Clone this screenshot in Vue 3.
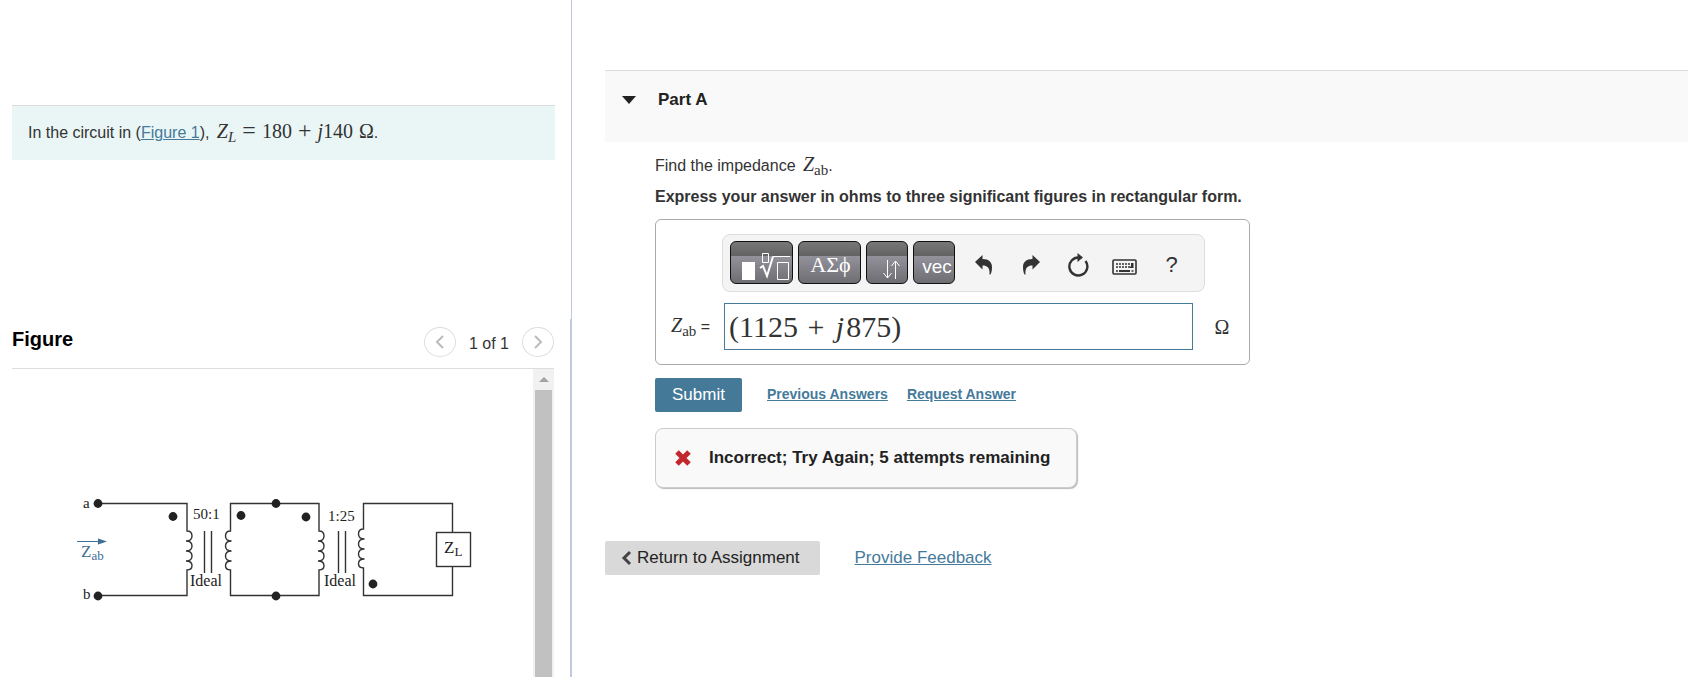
<template>
  <div class="page">
    <aside class="side">
      <section class="intro-area">
        <p class="intro">
          In the circuit in (<a href="#figure">Figure 1</a>),
          <span class="math equation"><i>Z</i><sub><i>L</i></sub><span class="op">=</span>180<span class="op">+</span><i>j</i>140<span class="unit">Ω</span></span>.
        </p>
      </section>

      <section id="figure" class="figure-area">
        <header class="figure-header">
          <h2>Figure</h2>
          <nav class="pager">
            <button type="button" aria-label="Previous figure">
              <svg width="10" height="16" viewBox="0 0 10 16"><path d="M8 2L2 8l6 6" /></svg>
            </button>
            <span>{{ figureIndex }} of {{ figureCount }}</span>
            <button type="button" aria-label="Next figure">
              <svg width="10" height="16" viewBox="0 0 10 16"><path d="M2 2l6 6-6 6" /></svg>
            </button>
          </nav>
        </header>

        <div class="figure-body">
          <svg class="circuit" width="410" height="120" viewBox="70 490 410 120">
            <!-- wires and windings -->
            <g class="wire">
              <path d="M98 503.500H187V531q5 0 5 5t-6 5q6 0 6 5t-6 5q6 0 6 5t-6 5q6 0 6 4.500t-5 4.500V595.500H98" />
              <path d="M319 503.500H230.500V531q-5 0-5 5t6 5q-6 0-6 5t6 5q-6 0-6 5t6 5q-6 0-6 4.500t5 4.500V595.500H319V570q5 0 5-4.500t-6-4.500q6 0 6-5t-6-5q6 0 6-5t-6-5q6 0 6-5t-5-5Z" />
              <path d="M452.500 532V503.500H363.500V529q-5 0-5 5t6 5q-6 0-6 5t6 5q-6 0-6 5t6 5q-6 0-6 4.500t5 4.500V595.500H452.500V567" />
              <path d="M204.500 531v42M211.500 531v42M338.500 531v42M345.500 531v42" />
              <rect x="436.500" y="532.500" width="34" height="34" />
            </g>
            <circle v-for="(dot, i) in dots" :key="i" :cx="dot[0]" :cy="dot[1]" r="4.400" />
            <g class="arrow">
              <path d="M77 541.500h24" />
              <path class="head" d="M98 538.500l9 3-9 3z" />
            </g>
            <text x="83" y="508">a</text>
            <text x="83" y="599">b</text>
            <text x="193" y="519">50:1</text>
            <text x="328" y="521">1:25</text>
            <text x="190" y="586" class="medium">Ideal</text>
            <text x="324" y="586" class="medium">Ideal</text>
            <text x="444" y="553" class="large">Z<tspan class="small" dy="3">L</tspan></text>
            <text x="81" y="557" class="large blue">Z<tspan class="small" dy="3">ab</tspan></text>
          </svg>
          <div class="scrollbar">
            <button type="button" class="scroll-up" aria-label="Scroll up"></button>
            <div class="thumb"></div>
          </div>
        </div>
      </section>
    </aside>

    <main class="main">
      <header class="part-header">
        <button type="button" class="part-toggle" @click="isOpen = !isOpen">
          <span class="caret"></span>
          Part A
        </button>
      </header>

      <section v-if="isOpen" class="part-body">
        <p class="question">
          Find the impedance <span class="math equation"><i>Z</i><sub>ab</sub></span>.
        </p>
        <p class="instructions">Express your answer in ohms to three significant figures in rectangular form.</p>

        <div class="answer-box">
          <div class="toolbar">
            <button type="button" class="key key-wide" aria-label="Templates">
              <svg width="61" height="41" viewBox="1 1 61 41">
                <rect x="12" y="21" width="13" height="18" fill="#fff" />
                <path d="M32.500 12.500h6v9h-6zM47.500 21.500h11v17h-11zM43 15.500h17" />
                <path class="thick" d="M30 27l3-2 4 10 6-19.500" />
              </svg>
            </button>
            <button type="button" class="key key-wide greek">ΑΣϕ</button>
            <button type="button" class="key key-small" aria-label="Subscript and superscript">
              <svg width="40" height="41" viewBox="1 1 40 41">
                <path d="M21.500 19v18M17.500 32l4 5 4-5M29.500 38V20M25.500 25l4-5 4 5" />
              </svg>
            </button>
            <button type="button" class="key key-small vec">vec</button>
            <button type="button" class="tool" aria-label="Undo">
              <svg width="18" height="20" viewBox="0 0 18 20">
                <path d="M0 7L7.500 0v4C14 4 17 7.500 17 12c0 3-.5 5.500-1.500 7.500h-1C15 13 12.500 10.500 7.500 10.500v4z" />
              </svg>
            </button>
            <button type="button" class="tool" aria-label="Redo">
              <svg width="18" height="20" viewBox="0 0 18 20">
                <path d="M18 7L10.500 0v4C4 4 1 7.500 1 12c0 3 .5 5.500 1.500 7.500h1C3 13 5.500 10.500 10.500 10.500v4z" />
              </svg>
            </button>
            <button type="button" class="tool" aria-label="Reset">
              <svg width="22" height="24" viewBox="0 0 22 24">
                <path class="ring" d="M12 4.500a9 9 0 1 0 6.500 3.500" />
                <path d="M10.500 0l5.500 4.500-5.500 4.500z" />
              </svg>
            </button>
            <button type="button" class="tool" aria-label="Keyboard shortcuts">
              <svg class="keyboard" width="26" height="16" viewBox="0 0 26 16">
                <rect class="frame" x="1" y="1" width="23" height="14" rx="1" />
                <path class="dots" d="M4 5h15M4 8h14M4 12h2M19.500 12h2" />
                <path d="M7 11h11v2H7zM19 4h2.500v5H18V7.500h1z" />
              </svg>
            </button>
            <button type="button" class="tool help" aria-label="Help">?</button>
          </div>

          <div class="answer-row">
            <label for="answer"><span class="math"><i>Z</i><sub>ab</sub></span> =</label>
            <div class="field">
              <div class="formula" aria-hidden="true">
                <template v-for="(part, i) in formulaParts" :key="i"><i v-if="isVariable(part)">{{ part }}</i><span v-else-if="part === '+'" class="plus">{{ part }}</span><template v-else>{{ part }}</template></template>
              </div>
              <input id="answer" v-model="answer" type="text" autocomplete="off" spellcheck="false" />
            </div>
            <span class="math answer-unit">Ω</span>
          </div>
        </div>

        <div class="actions">
          <button type="button" class="submit">Submit</button>
          <a href="#previous">Previous Answers</a>
          <a href="#request">Request Answer</a>
        </div>

        <div class="feedback" role="status">
          <svg width="18" height="18" viewBox="0 0 18 18"><path d="M3 3l12 12M15 3L3 15" /></svg>
          Incorrect; Try Again; 5 attempts remaining
        </div>
      </section>

      <footer class="footer">
        <button type="button" class="return">
          <svg width="11" height="16" viewBox="0 0 11 16"><path d="M9 2L3 8l6 6" /></svg>
          Return to Assignment
        </button>
        <a href="#feedback">Provide Feedback</a>
      </footer>
    </main>
  </div>
</template>

<script setup>
import { ref, computed } from 'vue'

const isOpen = ref(true)
const figureIndex = ref(1)
const figureCount = ref(1)
const answer = ref('(1125 + j875)')

// letters are variables and are set in italics
const formulaParts = computed(() => answer.value.split(/([a-z]+|\+)/i).filter(Boolean))
const isVariable = (part) => /^[a-z]+$/i.test(part)

const dots = [
  [98, 503.5],
  [98, 596],
  [173, 516.5],
  [241, 515.5],
  [276, 503.5],
  [276, 596],
  [306, 517],
  [373, 584]
]
</script>

<style>
body {
  margin: 0;
  background: #fff;
}
</style>

<style scoped>
.page {
  display: grid;
  grid-template-columns: minmax(0, 572fr) minmax(0, 1116fr);
  min-height: 100vh;
  font-family: "Liberation Sans", Arial, sans-serif;
  font-size: 16px;
  line-height: 20px;
  color: #333;
}

* {
  box-sizing: border-box;
}

button {
  font-family: inherit;
  cursor: pointer;
}

p,
h2 {
  margin: 0;
}

a {
  color: #457a9b;
}

.math {
  font-family: "Liberation Serif", "Times New Roman", serif;
  font-size: 20px;
  line-height: 0;
}

.math sub {
  font-size: 15px;
  line-height: 0;
  vertical-align: -4px;
}

.equation {
  margin-left: 3px;
}

.op {
  margin: 0 6px;
  font-size: 24px;
}

.unit {
  margin-left: 6px;
}

/* left column */
.side {
  display: flex;
  flex-direction: column;
}

.intro-area {
  padding: 105px 16px 159px 12px;
  border-right: 1px solid #bfcbdb;
}

.intro {
  padding: 17px 16px;
  background: #eaf6f6;
  border-top: 1px solid #ddd;
}

.figure-area {
  flex: 1;
  display: flex;
  flex-direction: column;
  padding: 8px 16px 0 12px;
  border-right: 2px solid #bfcadf;
}

.figure-header {
  display: flex;
  justify-content: space-between;
  align-items: flex-start;
  height: 42px;
  border-bottom: 1px solid #ddd;
}

.figure-header h2 {
  font-size: 20px;
  line-height: 24px;
  color: #000;
}

.pager {
  display: flex;
  align-items: center;
  gap: 13px;
}

.pager span {
  padding-top: 4px;
}

.pager button {
  display: flex;
  align-items: center;
  justify-content: center;
  width: 32px;
  height: 30px;
  padding: 0;
  background: #fff;
  border: 1px solid #ddd;
  border-radius: 50%;
}

.pager path {
  fill: none;
  stroke: #bbb;
  stroke-width: 2;
}

.figure-body {
  flex: 1;
  display: flex;
  justify-content: space-between;
}

.circuit {
  margin: 121px 0 0 58px;
  fill: #222;
  font-family: "Liberation Serif", "Times New Roman", serif;
  font-size: 15px;
}

.wire {
  fill: none;
  stroke: #333;
  stroke-width: 1.4;
}

.arrow path {
  stroke: #3c6e96;
}

.arrow .head {
  fill: #3c6e96;
  stroke: none;
}

.large {
  font-size: 17px;
}

.medium {
  font-size: 16px;
}

.small {
  font-size: 13px;
}

.blue {
  fill: #3c6e96;
}

.scrollbar {
  display: flex;
  flex-direction: column;
  width: 21px;
  padding: 0 2px;
  background: #f1f1f1;
}

.scroll-up {
  height: 21px;
  padding: 0;
  background: none;
  border: none;
}

.scroll-up::before {
  content: "";
  display: block;
  width: 0;
  margin: 0 auto;
  border: 5px solid transparent;
  border-top: none;
  border-bottom-color: #a3a3a3;
}

.thumb {
  flex: 1;
  background: #c1c1c1;
}

/* right column */
.main {
  padding: 70px 0 40px 33px;
}

.part-header {
  height: 72px;
  padding: 19px 17px;
  background: #f9f9f9;
  border-top: 1px solid #ddd;
}

.part-toggle {
  display: flex;
  align-items: center;
  gap: 22px;
  padding: 0;
  background: none;
  border: none;
  font-size: 17px;
  font-weight: bold;
  line-height: 20px;
  color: #222;
}

.caret {
  border: 7px solid transparent;
  border-top: 8px solid #222;
  border-bottom: none;
}

.part-body {
  max-width: 645px;
  padding: 13px 0 0 50px;
}

.question {
  line-height: 22px;
}

.instructions {
  margin-top: 10px;
  font-weight: bold;
  white-space: nowrap;
}

.answer-box {
  margin-top: 12px;
  padding: 14px 14px 14px 15px;
  border: 1px solid #aaa;
  border-radius: 6px;
}

.toolbar {
  display: flex;
  width: fit-content;
  height: 58px;
  margin-left: 51px;
  padding: 6px 9px 0 7px;
  background: #f4f4f4;
  border: 1px solid #ddd;
  border-radius: 8px;
}

.key {
  height: 43px;
  margin-right: 5px;
  padding: 0;
  overflow: hidden;
  background: linear-gradient(#777, #626262 34%, #93929b 35%, #6e6d72);
  border: 1px solid #111;
  border-radius: 6px;
  color: #fff;
}

.key-wide {
  width: 63px;
}

.key-small {
  width: 42px;
}

.key svg {
  display: block;
}

.key path {
  fill: none;
  stroke: #fff;
}

.key .thick {
  stroke-width: 2;
}

.greek {
  padding: 4px 0 0 2px;
  font-family: "Liberation Serif", "DejaVu Serif", serif;
  font-size: 22px;
}

.vec {
  padding: 9px 0 0 6px;
  font-size: 19px;
}

.tool {
  display: flex;
  align-items: center;
  justify-content: center;
  width: 47px;
  height: 48px;
  padding: 0;
  background: none;
  border: none;
}

.tool svg {
  fill: #333;
}

.tool .ring {
  fill: none;
  stroke: #333;
  stroke-width: 2.4;
}

.tool .keyboard {
  margin-top: 4px;
}

.tool .frame {
  fill: none;
  stroke: #333;
  stroke-width: 1.6;
}

.tool .dots {
  stroke: #333;
  stroke-width: 1.6;
  stroke-dasharray: 2 1;
}

.help {
  font-size: 22px;
  color: #333;
}

.answer-row {
  display: flex;
  align-items: center;
  margin-top: 11px;
}

.answer-row label {
  width: 53px;
  font-size: 16px;
}

.field {
  position: relative;
  flex: 1;
  height: 47px;
  border: 1px solid #457a9b;
}

.formula,
.field input {
  padding: 0 4px;
  font-family: "Liberation Serif", "Times New Roman", serif;
  font-size: 30px;
  line-height: 45px;
  white-space: pre;
}

.formula i {
  margin: 0 2px;
}

.plus {
  margin: 0 2px;
}

/* typing goes through the input, the formula beneath shows the result */
.field input {
  position: absolute;
  inset: 0;
  width: 100%;
  background: none;
  border: none;
  outline: none;
  color: transparent;
  caret-color: #333;
}

.answer-unit {
  width: 42px;
  padding-left: 16px;
  text-align: center;
}

.actions {
  display: flex;
  align-items: flex-start;
  gap: 19px;
  margin-top: 13px;
  font-size: 14px;
  font-weight: bold;
}

.actions a {
  padding-top: 6px;
}

.submit {
  width: 87px;
  height: 34px;
  margin-right: 6px;
  padding: 0;
  background: #457998;
  border: none;
  border-radius: 2px;
  font-size: 17px;
  color: #fff;
}

.feedback {
  display: flex;
  align-items: center;
  gap: 17px;
  width: fit-content;
  height: 60px;
  margin-top: 16px;
  padding: 0 26px 0 18px;
  background: #f9f9f9;
  border: 1px solid #ccc;
  border-radius: 8px;
  box-shadow: 1px 1px 1px #bbb;
  font-size: 17px;
  font-weight: bold;
  color: #222;
}

.feedback path {
  stroke: #c1272d;
  stroke-width: 5;
}

.footer {
  display: flex;
  align-items: center;
  gap: 35px;
  margin-top: 53px;
  font-size: 17px;
}

.return {
  display: flex;
  align-items: center;
  gap: 5px;
  height: 34px;
  padding: 0 20px 0 16px;
  background: #d9d9d9;
  border: none;
  border-radius: 2px;
  font-size: 17px;
  color: #222;
}

.return path {
  fill: none;
  stroke: #444;
  stroke-width: 3;
}
</style>
